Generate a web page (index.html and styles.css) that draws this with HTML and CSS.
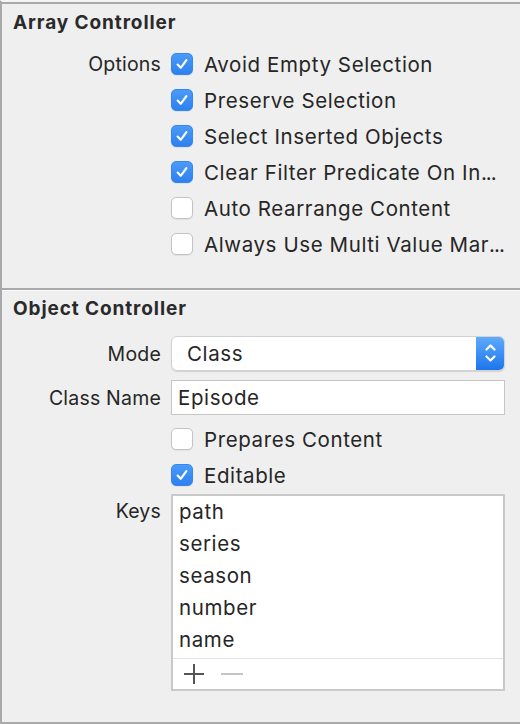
FILE: index.html
```html
<!DOCTYPE html>
<html>
<head>
<meta charset="utf-8">
<link rel="stylesheet" href="styles.css">
</head>
<body>
<div class="panel">
  <section class="section sec-array">
    <h2 class="title">Array Controller</h2>
    <div class="row check-row">
      <div class="label">Options</div>
      <label class="check"><span class="box on"><svg viewBox="0 0 22 22"><path d="M6.2 11.6 L9.6 15.2 L15.8 6.8"/></svg></span><span class="ctext">Avoid Empty Selection</span></label>
    </div>
    <div class="row check-row">
      <div class="label"></div>
      <label class="check"><span class="box on"><svg viewBox="0 0 22 22"><path d="M6.2 11.6 L9.6 15.2 L15.8 6.8"/></svg></span><span class="ctext">Preserve Selection</span></label>
    </div>
    <div class="row check-row">
      <div class="label"></div>
      <label class="check"><span class="box on"><svg viewBox="0 0 22 22"><path d="M6.2 11.6 L9.6 15.2 L15.8 6.8"/></svg></span><span class="ctext">Select Inserted Objects</span></label>
    </div>
    <div class="row check-row">
      <div class="label"></div>
      <label class="check"><span class="box on"><svg viewBox="0 0 22 22"><path d="M6.2 11.6 L9.6 15.2 L15.8 6.8"/></svg></span><span class="ctext">Clear Filter Predicate On In<span class="dots">...</span></span></label>
    </div>
    <div class="row check-row">
      <div class="label"></div>
      <label class="check"><span class="box"></span><span class="ctext">Auto Rearrange Content</span></label>
    </div>
    <div class="row check-row">
      <div class="label"></div>
      <label class="check"><span class="box"></span><span class="ctext">Always Use Multi Value Mar<span class="dots">...</span></span></label>
    </div>
  </section>
  <section class="section sec-object">
    <h2 class="title">Object Controller</h2>
    <div class="row field-row">
      <div class="label">Mode</div>
      <div class="popup">
        <span class="popup-text">Class</span>
        <span class="popup-arrows"><svg viewBox="0 0 29 34"><path d="M10.5 13.5 L14.5 9.5 L18.5 13.5 M10.5 20.5 L14.5 24.5 L18.5 20.5"/></svg></span>
      </div>
    </div>
    <div class="row field-row gap10">
      <div class="label">Class Name</div>
      <div class="textfield">Episode</div>
    </div>
    <div class="row check-row gap7">
      <div class="label"></div>
      <label class="check"><span class="box"></span><span class="ctext">Prepares Content</span></label>
    </div>
    <div class="row check-row">
      <div class="label"></div>
      <label class="check"><span class="box on"><svg viewBox="0 0 22 22"><path d="M6.2 11.6 L9.6 15.2 L15.8 6.8"/></svg></span><span class="ctext">Editable</span></label>
    </div>
    <div class="row list-row">
      <div class="label keys-label">Keys</div>
      <div class="list">
        <ul class="items">
          <li>path</li>
          <li>series</li>
          <li>season</li>
          <li>number</li>
          <li>name</li>
        </ul>
        <div class="list-bar">
          <svg class="plus" viewBox="0 0 22 22"><path d="M11 1 V21 M1 11 H21"/></svg>
          <svg class="minus" viewBox="0 0 22 22"><path d="M0 11 H22"/></svg>
        </div>
      </div>
    </div>
  </section>
</div>
</body>
</html>
```
FILE: styles.css
```css
* { box-sizing: border-box; }
html, body {
  margin: 0;
  padding: 0;
  background: #efefef;
}
body {
  width: 520px;
  height: 724px;
  overflow: hidden;
  font-family: Inter, "Noto Sans", "Liberation Sans", sans-serif;
  color: #262626;
  font-size: 20.5px;
  letter-spacing: 0.6px;
}
.panel {
  height: 724px;
  border-left: 2px solid #a9a9a9;
  border-top: 2px solid #f4f4f4;
  display: flex;
  flex-direction: column;
}
.section {
  display: flex;
  flex-direction: column;
}
.sec-array {
  border-top: 2px solid #a9a9a9;
  height: 286px;
}
.sec-object {
  border-top: 2px solid #a9a9a9;
  box-shadow: inset 0 1px 0 #fafafa;
  flex: 1;
  border-bottom: 2px solid #a9a9a9;
}
.title {
  margin: 0;
  font-size: 19px;
  font-weight: 700;
  letter-spacing: 0.9px;
  color: #2a2a2a;
  padding-left: 11px;
  line-height: 24px;
}
.sec-array .title { padding-top: 7px; height: 42px; }
.sec-object .title { padding-top: 7px; height: 46px; }
.row {
  display: grid;
  grid-template-columns: 159px 334px;
  column-gap: 10px;
  align-items: center;
}
.label {
  text-align: right;
  white-space: nowrap;
  font-size: 19.5px;
  letter-spacing: 0.2px;
}
.dots { letter-spacing: -1px; }
.check-row { height: 36px; }
.check {
  display: flex;
  align-items: center;
  gap: 11px;
  white-space: nowrap;
}
.box {
  width: 22px;
  height: 22px;
  border-radius: 5px;
  background: #fff;
  border: 1px solid #c3c3c3;
  box-shadow: 0 1px 1px rgba(0,0,0,0.06);
  flex: none;
  display: flex;
}
.box.on {
  background: linear-gradient(#4b9bf9, #2d80ef);
  border-color: #3687f1;
}
.box svg {
  width: 20px;
  height: 20px;
}
.box svg path {
  fill: none;
  stroke: #fff;
  stroke-width: 2.4;
  stroke-linecap: round;
  stroke-linejoin: round;
}
.field-row { height: 34px; }
.gap10 { margin-top: 10px; }
.gap7 { margin-top: 7px; }
.popup {
  height: 35px;
  background: #fff;
  border-radius: 6px;
  border: 1px solid #d2d2d2;
  box-shadow: 0 1px 1px rgba(0,0,0,0.12);
  display: flex;
  align-items: center;
  justify-content: space-between;
  overflow: hidden;
}
.popup-text { padding-left: 15px; }
.popup-arrows {
  width: 29px;
  height: 35px;
  margin-right: -1px;
  background: linear-gradient(#60abfd, #1b74ea);
  display: flex;
}
.popup-arrows svg { width: 29px; height: 34px; }
.popup-arrows path {
  fill: none;
  stroke: #fff;
  stroke-width: 2.2;
  stroke-linecap: round;
  stroke-linejoin: round;
}
.textfield {
  height: 35px;
  background: #fff;
  border: 1px solid #c6c6c6;
  padding-left: 6px;
  display: flex;
  align-items: center;
}
.list-row {
  margin-top: 1px;
  align-items: start;
}
.keys-label { padding-top: 5px; }
.list {
  height: 197px;
  background: #fff;
  border: 2px solid #c9c9c9;
  display: flex;
  flex-direction: column;
}
.items {
  list-style: none;
  margin: 0;
  padding: 0;
  flex: 1;
}
.items li {
  height: 32px;
  line-height: 32px;
  padding-left: 6px;
}
.list-bar {
  height: 31px;
  border-top: 1px solid #e3e3e3;
  display: flex;
  align-items: center;
  padding-left: 10px;
  gap: 16px;
}
.list-bar svg { width: 22px; height: 22px; }
.list-bar path { fill: none; stroke-width: 2; }
.plus path { stroke: #555; }
.minus path { stroke: #c4c4c4; }
```
